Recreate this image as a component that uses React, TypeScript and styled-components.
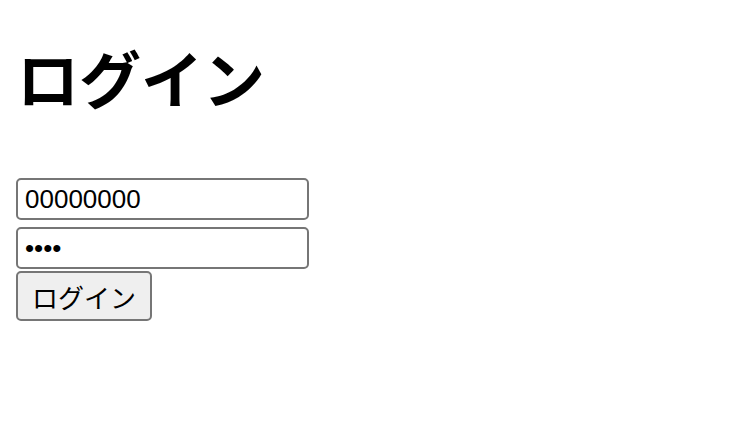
import React, { useState } from 'react';
import styled, { createGlobalStyle } from 'styled-components';

const GlobalStyle = createGlobalStyle`
    html, body {
        margin: 0;
        padding: 0;
        background: #ffffff;
    }
    body {
        font-family: "Liberation Sans", "Noto Sans CJK JP", sans-serif;
        color: #000000;
    }
`
const Page = styled.div`
    padding: 0 16px;
`
const Title = styled.h1`
    font-family: "Liberation Sans", "Noto Sans CJK JP", sans-serif;
    font-size: 62px;
    font-weight: bold;
    line-height: 78px;
    margin: 44px 0 56px 0;
    padding-left: 1px;
`
const Form = styled.form`
    display: flex;
    flex-direction: column;
    align-items: flex-start;
`
const Input = styled.input<{ $gap: number }>`
    box-sizing: border-box;
    width: 293px;
    height: 42px;
    margin: 0 0 ${(props) => props.$gap}px 0;
    padding: 2px 7px;
    font-family: "Liberation Sans", "Noto Sans CJK JP", sans-serif;
    font-size: 26px;
    color: #000000;
    background: #ffffff;
    border: 2px solid #767676;
    border-radius: 5px;
    outline: none;
`
const LoginButton = styled.button`
    box-sizing: border-box;
    height: 50px;
    padding: 2px 14px;
    font-family: "Liberation Sans", "Noto Sans CJK JP", sans-serif;
    font-size: 26px;
    color: #000000;
    background: #efefef;
    border: 2px solid #767676;
    border-radius: 5px;
    cursor: pointer;
`

export default function App() {
    const [id, setId] = useState<string>('00000000');
    const [password, setPassword] = useState<string>('1234');

    return (
        <Page>
            <GlobalStyle />
            <Title>ログイン</Title>
            <Form onSubmit={(e) => e.preventDefault()}>
                <Input $gap={7} type="text" value={id} onChange={(e) => setId(e.target.value)} />
                <Input $gap={2} type="password" value={password} onChange={(e) => setPassword(e.target.value)} />
                <LoginButton type="submit">ログイン</LoginButton>
            </Form>
        </Page>
    );
}
